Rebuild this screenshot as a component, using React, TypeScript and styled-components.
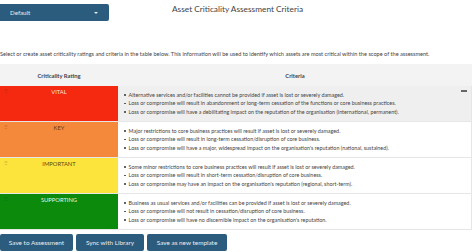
import React from 'react';
import styled, { createGlobalStyle } from 'styled-components';

const GlobalStyle = createGlobalStyle`
  html, body {
    margin: 0;
    padding: 0;
    background: #fff;
    font-family: Lato, "Open Sans", sans-serif;
    color: #333;
  }
`;

type Rating = {
  name: string;
  bg: string;
  fg: string;
  criteria: string[];
  active?: boolean;
};

const ratings: Rating[] = [
  {
    name: 'VITAL',
    bg: '#f4290f',
    fg: '#f6e0d8',
    active: true,
    criteria: [
      'Alternative services and/or facilities cannot be provided if asset is lost or severely damaged.',
      'Loss or compromise will result in abandonment or long-term cessation of the functions or core business practices.',
      'Loss or compromise will have a debilitating impact on the reputation of the organisation (international, permanent).',
    ],
  },
  {
    name: 'KEY',
    bg: '#f5893b',
    fg: '#6b3a1a',
    criteria: [
      'Major restrictions to core business practices will result if asset is lost or severely damaged.',
      'Loss or compromise will result in long-term cessation/disruption of core business.',
      "Loss or compromise will have a major, widespread impact on the organisation's reputation (national, sustained).",
    ],
  },
  {
    name: 'IMPORTANT',
    bg: '#fde43c',
    fg: '#5a4a10',
    criteria: [
      'Some minor restrictions to core business practices will result if asset is lost or severely damaged.',
      'Loss or compromise will result in short-term cessation/disruption of core business.',
      "Loss or compromise may have an impact on the organisation's reputation (regional, short-term).",
    ],
  },
  {
    name: 'SUPPORTING',
    bg: '#0b8a0b',
    fg: '#e8f4e0',
    criteria: [
      'Business as usual services and/or facilities can be provided if asset is lost or severely damaged.',
      'Loss or compromise will not result in cessation/disruption of core business.',
      "Loss or compromise will have no discernible impact on the organisation's reputation.",
    ],
  },
];

const Page = () => {
  return (
    <>
      <GlobalStyle />
      <Wrapper>
        <TopBar>
          <Dropdown>
            <span>Default</span>
            <Caret />
          </Dropdown>
          <Title>Asset Criticality Assessment Criteria</Title>
        </TopBar>

        <Intro>
          Select or create asset criticality ratings and criteria in the table below. This information will be used to identify which assets are most critical within the scope of the assessment.
        </Intro>

        <Table>
          <HeaderRow>
            <HeaderCell>Criticality Rating</HeaderCell>
            <HeaderCell>Criteria</HeaderCell>
          </HeaderRow>
          {ratings.map((r) => (
            <Row key={r.name}>
              <RatingCell $bg={r.bg} $fg={r.fg}>
                <Handle>⠿</Handle>
                {r.name}
              </RatingCell>
              <CriteriaCell $active={r.active}>
                <BulletList>
                  {r.criteria.map((c) => (
                    <Bullet key={c}>{c}</Bullet>
                  ))}
                </BulletList>
                {r.active && <RowMenu />}
              </CriteriaCell>
            </Row>
          ))}
        </Table>

        <Buttons>
          <ActionButton $w={73}>Save to Assessment</ActionButton>
          <ActionButton $w={68}>Sync with Library</ActionButton>
          <ActionButton $w={80}>Save as new template</ActionButton>
        </Buttons>
      </Wrapper>
    </>
  );
};

const Wrapper = styled.div`
  width: 474px;
  height: 252px;
  overflow: hidden;
  display: flex;
  flex-direction: column;
`;

const TopBar = styled.div`
  display: flex;
  align-items: flex-start;
  padding-top: 4px;
  height: 30px;
`;

const Dropdown = styled.div`
  width: 109px;
  height: 17px;
  box-sizing: border-box;
  background: #2c5c7d;
  border-radius: 0 2px 2px 0;
  color: #e8eef2;
  font-size: 6.2px;
  display: flex;
  align-items: center;
  justify-content: space-between;
  padding: 0 11px 0 10px;
`;

const Caret = styled.span`
  width: 0;
  height: 0;
  border-left: 2px solid transparent;
  border-right: 2px solid transparent;
  border-top: 2px solid #e8eef2;
`;

const Title = styled.div`
  margin-left: 63px;
  margin-top: 0px;
  font-size: 8.3px;
  color: #444;
`;

const Intro = styled.div`
  margin-top: 16px;
  font-size: 5.6px;
  color: #444;
  white-space: nowrap;
`;

const Table = styled.div`
  margin-top: 7px;
  width: 472px;
  display: flex;
  flex-direction: column;
`;

const HeaderRow = styled.div`
  display: grid;
  grid-template-columns: 118px 1fr;
  height: 22px;
  background: #f3f3f3;
`;

const HeaderCell = styled.div`
  display: flex;
  align-items: center;
  justify-content: center;
  font-size: 5.8px;
  font-weight: 700;
  color: #444;
  padding-top: 1px;
`;

const Row = styled.div`
  display: grid;
  grid-template-columns: 118px 1fr;
  height: 35px;
  border-bottom: 1px solid #e6e6e6;
`;

const RatingCell = styled.div<{ $bg: string; $fg: string }>`
  position: relative;
  background: ${(p) => p.$bg};
  color: ${(p) => p.$fg};
  font-size: 5.8px;
  text-align: center;
  padding-top: 2px;
`;

const Handle = styled.span`
  position: absolute;
  left: 4px;
  top: 2px;
  font-size: 5px;
  opacity: 0.35;
  color: #333;
`;

const CriteriaCell = styled.div<{ $active?: boolean }>`
  position: relative;
  background: ${(p) => (p.$active ? '#efefef' : '#fff')};
  border-right: 1px solid #e6e6e6;
`;

const BulletList = styled.div`
  display: flex;
  flex-direction: column;
  padding: 5px 0 0 6px;
`;

const Bullet = styled.div`
  display: flex;
  align-items: center;
  gap: 3px;
  font-size: 5.4px;
  line-height: 8.4px;
  color: #444;
  white-space: nowrap;

  &::before {
    content: '';
    width: 1.6px;
    height: 1.6px;
    border-radius: 50%;
    background: #444;
    flex-shrink: 0;
  }
`;

const RowMenu = styled.span`
  position: absolute;
  right: 4px;
  top: 4px;
  width: 6px;
  height: 1.5px;
  background: #666;
`;

const Buttons = styled.div`
  display: flex;
  gap: 3px;
  margin-top: 4px;
`;

const ActionButton = styled.button<{ $w: number }>`
  width: ${(p) => p.$w}px;
  height: 17px;
  border: none;
  border-radius: 2px;
  background: #2c5c7d;
  color: #e8eef2;
  font-family: Lato, sans-serif;
  font-size: 6.4px;
  padding: 0;
  cursor: pointer;
`;

export default function App() {
  return <Page />;
}
